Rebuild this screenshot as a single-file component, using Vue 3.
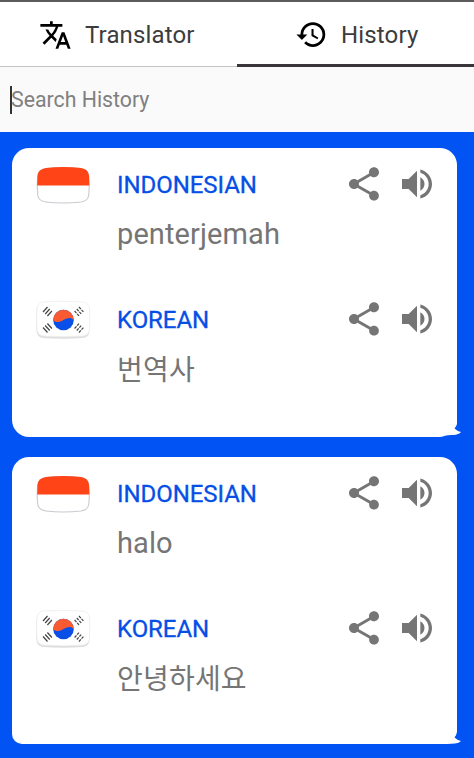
<script setup>
const cards = [
  [
    { lang: 'INDONESIAN', flag: 'id', text: 'penterjemah' },
    { lang: 'KOREAN', flag: 'kr', text: '번역사' },
  ],
  [
    { lang: 'INDONESIAN', flag: 'id', text: 'halo' },
    { lang: 'KOREAN', flag: 'kr', text: '안녕하세요' },
  ],
]
const tails = [
  'M0 0H18V3Q17.500 5 15.500 7.500Q18 10 22 11Q20 13.500 14 14Q9 13.800 6 14.800Q3 16 0 16Z',
  'M0 0H18V4Q17.500 7 15.500 9.500Q18 12 22 13Q20 15 16 15.500L8 16H0Z',
]
</script>

<template>
  <div class="screen">
    <nav class="tabs">
      <button class="tab translator">
        <svg class="translate-icon" viewBox="0 0 24 24"><path d="M12.87 15.07l-2.54-2.51.03-.03A17.52 17.52 0 0 0 14.07 6H17V4h-7V2H8v2H1v2h11.17C11.5 7.92 10.44 9.75 9 11.35 8.07 10.32 7.3 9.19 6.69 8h-2c.73 1.63 1.73 3.17 2.98 4.56l-5.09 5.02L4 19l5-5 3.11 3.11.76-2.04zM18.5 10h-2L12 22h2l1.12-3h4.75L21 22h2l-4.5-12zm-2.62 7l1.62-4.33L19.12 17h-3.24z" /></svg>
        <span>Translator</span>
      </button>
      <button class="tab history active">
        <svg class="history-icon" viewBox="0 0 24 24"><path d="M13 3a9 9 0 0 0-9 9H1l3.89 3.89.07.14L9 12H6c0-3.87 3.13-7 7-7s7 3.13 7 7-3.13 7-7 7c-1.93 0-3.68-.79-4.94-2.06l-1.42 1.42A8.954 8.954 0 0 0 13 21a9 9 0 0 0 0-18zm-1 5v5l4.28 2.54.72-1.21-3.5-2.08V8H12z" /></svg>
        <span>History</span>
      </button>
    </nav>
    <div class="search"><span class="caret"></span><span class="hint">Search History</span></div>
    <main class="list">
      <section v-for="(card, i) in cards" :key="i" class="card">
        <div v-for="row in card" :key="row.lang" class="entry">
          <svg v-if="row.flag === 'id'" class="flag" viewBox="0 0 58 42">
            <path d="M12 4.500Q29 2.500 47 4.500Q54 5.500 54.800 12Q55.800 21 54.800 31Q54 37 47 38Q29 40 12 38Q4.500 37 3.700 31Q2.700 21 3.700 12Q4.500 5.500 12 4.500Z" fill="#fff" stroke="#c9c9d0" stroke-width="1.100" />
            <path d="M12 4Q29 2 47 4Q54.500 5 55 12L55.300 21.500H3.200L3.500 12Q4 5 12 4Z" fill="#ff4518" />
          </svg>
          <svg v-else class="flag" viewBox="0 0 58 42">
            <path d="M9 4Q29 2 49 4Q55 5 55.500 11Q56.500 21 55.500 32Q55 38 49 39Q29 40.500 9 39Q3 38 2.500 32Q1.500 21 2.500 11Q3 5 9 4Z" fill="#dedede" />
            <path d="M9 3Q29 1.500 49 3Q55 4 55.500 10Q56 20 55.500 30Q55 36 49 37Q29 38.500 9 37Q3.500 36 3 30Q2 20 3 10Q3.500 4 9 3Z" fill="#fff" stroke="#eee" stroke-width=".8" />
            <circle cx="29.500" cy="21" r="10.300" fill="#0a50e8" />
            <path d="M19.200 21A10.300 10.300 0 0 1 39.800 21C36.500 17.500 32.500 19 29.500 21S21.500 24.500 19.200 21Z" fill="#fa5a32" />
            <g stroke="#444" stroke-width="1.200">
              <path d="M9 13l4.500-5M11.200 15l4.500-5M13.400 17l4.500-5" />
              <path d="M9 28.500l4.500 5M11.200 26.500l4.500 5M13.400 24.500l4.500 5" />
              <path d="M45 8l4.500 5M42.800 10l4.500 5M40.600 12l4.500 5" stroke-dasharray="2.800 1" />
              <path d="M45 33.500l4.500-5M42.800 31.500l4.500-5M40.600 29.500l4.500-5" stroke-dasharray="2.800 1" />
            </g>
          </svg>
          <div class="copy">
            <div class="lang">{{ row.lang }}</div>
            <div class="text" :class="{ hangul: row.flag === 'kr' }">{{ row.text }}</div>
          </div>
          <svg class="action" viewBox="0 0 24 24"><path d="M18 16.080c-.76 0-1.440.3-1.960.77L8.910 12.700c.05-.23.09-.46.09-.7s-.04-.47-.09-.7l7.050-4.110c.54.5 1.250.81 2.040.81 1.660 0 3-1.340 3-3s-1.340-3-3-3-3 1.340-3 3c0 .24.04.47.09.7L8.040 9.810C7.500 9.310 6.790 9 6 9c-1.660 0-3 1.340-3 3s1.340 3 3 3c.79 0 1.500-.31 2.040-.81l7.120 4.160c-.05.21-.08.43-.08.650 0 1.610 1.310 2.920 2.920 2.920s2.920-1.310 2.920-2.920-1.310-2.920-2.920-2.920z" /></svg>
          <svg class="action sound" viewBox="0 0 24 24"><path d="M3 9v6h4l5 5V4L7 9H3zm13.500 3c0-1.770-1.020-3.290-2.500-4.030v8.050c1.480-.73 2.500-2.250 2.500-4.020zM14 3.230v2.060c2.890.86 5 3.540 5 6.710s-2.110 5.850-5 6.710v2.060c4.010-.91 7-4.490 7-8.770s-2.990-7.860-7-8.770z" /></svg>
        </div>
        <svg class="tail" viewBox="0 0 22 16"><path :d="tails[i]" fill="#fff" /></svg>
      </section>
    </main>
  </div>
</template>

<style>
body { margin: 0; }
</style>

<style scoped>
.screen {
  box-sizing: border-box;
  width: 474px;
  height: 758px;
  overflow: hidden;
  display: flex;
  flex-direction: column;
  border-top: 2px solid #5c5a5c;
  background: #fafafa;
  font-family: Roboto, "Noto Sans CJK KR", sans-serif;
}
.tabs {
  height: 65px;
  box-sizing: border-box;
  display: grid;
  grid-template-columns: 1fr 1fr;
  flex: none;
  background: #fff;
}
.tab {
  display: flex;
  align-items: center;
  box-sizing: border-box;
  border: 0;
  border-bottom: 1px solid #c4c4c4;
  background: none;
  font: 400 24px/30px Roboto, sans-serif;
  color: #3c3c3c;
  letter-spacing: .15px;
}
.tab.active { border-bottom: 3px solid #38363a; }
.tab.translator { padding: 1px 0 0 39px; gap: 13px; }
.tab.history { padding: 3px 0 0 58px; gap: 13px; }
.translate-icon { width: 33px; height: 34px; fill: #000; }
.history-icon { width: 33px; height: 33px; fill: #000; }
.search {
  height: 65px;
  flex: none;
  display: flex;
  align-items: center;
  padding-left: 10px;
  font-size: 21.3px;
  color: #808080;
}
.caret { width: 2px; height: 28px; margin-right: -1px; background: #333; }
.list {
  flex: 1;
  display: grid;
  grid-template-rows: 289px 287px;
  gap: 20px;
  padding: 16px 17px 14px 12px;
  background: #0253f4;
}
.card {
  position: relative;
  box-sizing: border-box;
  padding: 16px 20px 0 22px;
  border-radius: 17px 17px 0 17px;
  background: linear-gradient(#fff, #fff) 0 0 / 100% calc(100% - 16px) no-repeat,
    linear-gradient(#fff, #fff) 0 100% / calc(100% - 18px) 16px no-repeat;
}
.card:last-child { border-bottom-left-radius: 10px; }
.entry { display: flex; align-items: flex-start; height: 135px; }
.flag { width: 58px; height: 42px; margin-right: 25px; flex: none; }
.copy { flex: 1; }
.lang { height: 42px; font: 400 24px/42px Roboto, sans-serif; letter-spacing: -.05px; color: #054fe6; -webkit-text-stroke: .3px #054fe6; white-space: nowrap; }
.text { height: 56px; font-size: 29px; line-height: 57px; letter-spacing: .1px; color: #757575; white-space: nowrap; }
.hangul { font-size: 28px; line-height: 60px; letter-spacing: .2px; }
.action { width: 40px; height: 40px; flex: none; fill: #757575; }
.sound { margin-left: 13px; }
.tail { position: absolute; right: -4px; bottom: 0; width: 22px; height: 16px; }
</style>
